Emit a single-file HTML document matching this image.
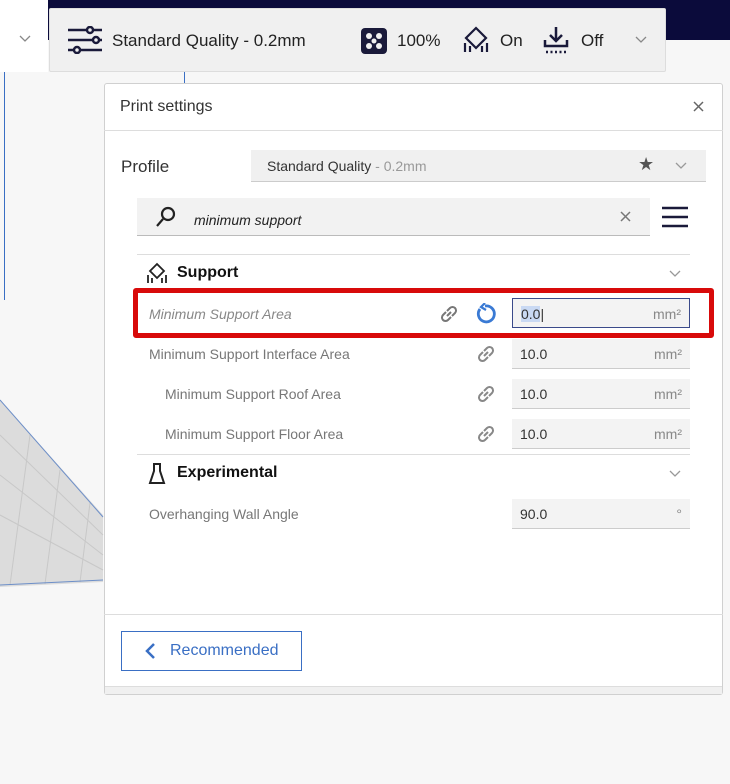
<!DOCTYPE html>
<html><head><meta charset="utf-8"><style>
*{box-sizing:border-box;margin:0;padding:0}
body{width:730px;height:784px;background:#f7f7f7;font-family:"Liberation Sans","DejaVu Sans",sans-serif;position:relative;overflow:hidden;color:#333}
.a{position:absolute}
.t{font-size:14px;color:#777;white-space:nowrap}
.inp{position:absolute;left:512px;width:178px;height:30px;background:#f3f3f3;border-bottom:1px solid #ccc;font-size:14px;color:#333;padding:7px 8px}
.inp .u{position:absolute;right:8px;top:7px;color:#888}
</style></head><body>
<div class="a" style="left:0;top:0;width:730px;height:40px;background:#0b0b3b"></div>
<div class="a" style="left:0;top:40px;width:730px;height:744px;background:#f7f7f7"></div>
<div class="a" style="left:0;top:0;width:48px;height:72px;background:#fff"></div>
<svg class="a" style="left:19px;top:35px" width="12" height="8" stroke="#888" stroke-width="1.3" fill="none"><path d="M1 1 L6 6 L11 1"/></svg>
<div class="a" style="left:4px;top:72px;width:1px;height:228px;background:#3a6fc4"></div>
<div class="a" style="left:184px;top:72px;width:1px;height:12px;background:#3a6fc4"></div>
<svg class="a" style="left:0;top:395px" width="104" height="200"><polygon points="0,5 103,120 103,187 0,192" fill="#dcdcdc"/><g stroke="#c8c8c8" stroke-width="1"><line x1="0" y1="40" x2="103" y2="140"/><line x1="0" y1="80" x2="103" y2="160"/><line x1="0" y1="120" x2="103" y2="175"/><line x1="30" y1="40" x2="10" y2="190"/><line x1="60" y1="75" x2="45" y2="189"/><line x1="90" y1="108" x2="80" y2="187"/></g><polyline points="0,5 103,122" stroke="#6d8fc8" fill="none"/><polyline points="0,190 103,185" stroke="#6d8fc8" fill="none"/></svg>
<div class="a" style="left:49px;top:8px;width:617px;height:64px;background:#f0f0f0;border:1px solid #ddd;border-radius:2px"></div>
<svg class="a" style="left:68px;top:26px" width="34" height="28" stroke="#1a1a3a" stroke-width="2.5" fill="none"><line x1="0" y1="4" x2="34" y2="4"/><line x1="0" y1="14" x2="34" y2="14"/><line x1="0" y1="24" x2="34" y2="24"/><circle cx="22" cy="4" r="3" fill="#f0f0f0"/><circle cx="28" cy="14" r="3" fill="#f0f0f0"/><circle cx="9" cy="24" r="3" fill="#f0f0f0"/></svg>
<div class="a" style="left:112px;top:31px;font-size:17px;color:#222">Standard Quality - 0.2mm</div>
<svg class="a" style="left:361px;top:28px" width="26" height="26"><rect x="0" y="0" width="26" height="26" rx="4" fill="#1a1a3a"/><g fill="#f0f0f0"><circle cx="8" cy="8" r="3"/><circle cx="18" cy="8" r="3"/><circle cx="8" cy="18" r="3"/><circle cx="18" cy="18" r="3"/><circle cx="13" cy="13" r="2.5"/></g></svg>
<div class="a" style="left:397px;top:31px;font-size:17px;color:#222">100%</div>
<svg class="a" style="left:462px;top:26px" width="28" height="28" stroke="#1a1a3a" stroke-width="2.2" fill="none"><path d="M14 2 L24 12 L14 22 L4 12 Z"/><path d="M3 26 V17 M8 26 V20 M20 26 V20 M25 26 V17"/></svg>
<div class="a" style="left:500px;top:31px;font-size:17px;color:#222">On</div>
<svg class="a" style="left:543px;top:26px" width="26" height="28" stroke="#1a1a3a" stroke-width="2.5" fill="none"><path d="M13 1 V14 M7 9 L13 15 L19 9 M2 14 V20 H24 V14"/><path d="M3 26 H23" stroke-dasharray="2 2.5"/></svg>
<div class="a" style="left:581px;top:31px;font-size:17px;color:#222">Off</div>
<svg class="a" style="left:635px;top:36px" width="12" height="8" stroke="#888" stroke-width="1.3" fill="none"><path d="M1 1 L6 6 L11 1"/></svg>

<div class="a" style="left:104px;top:83px;width:619px;height:612px;background:#fff;border:1px solid #d0d0d0;border-radius:3px"></div>
<div class="a" style="left:104px;top:130px;width:619px;height:1px;background:#ddd"></div>
<div class="a" style="left:120px;top:98px;font-size:16px;color:#333">Print settings</div>
<svg class="a" style="left:693px;top:101px" width="11" height="11" stroke="#666" stroke-width="1.5"><path d="M1 1 L10 10 M10 1 L1 10"/></svg>
<div class="a" style="left:121px;top:157px;font-size:17px;color:#333">Profile</div>
<div class="a" style="left:251px;top:150px;width:455px;height:32px;background:#f0f0f0;border-bottom:1px solid #ccc"></div>
<div class="a" style="left:267px;top:158px;font-size:14px;color:#333">Standard Quality <span style="color:#999">- 0.2mm</span></div>
<div class="a" style="left:638px;top:154px;font-size:18px;color:#555">★</div>
<svg class="a" style="left:675px;top:162px" width="12" height="8" stroke="#999" stroke-width="1.3" fill="none"><path d="M1 1 L6 6 L11 1"/></svg>
<div class="a" style="left:137px;top:198px;width:513px;height:38px;background:#f2f2f2;border-bottom:1px solid #bbb"></div>
<svg class="a" style="left:155px;top:206px" width="22" height="22" stroke="#222" stroke-width="2.2" fill="none"><circle cx="13" cy="8" r="6"/><line x1="8" y1="13" x2="2" y2="20"/></svg>
<div class="a" style="left:194px;top:212px;font-size:14px;font-style:italic;color:#222">minimum support</div>
<svg class="a" style="left:620px;top:211px" width="11" height="11" stroke="#777" stroke-width="1.5"><path d="M1 1 L10 10 M10 1 L1 10"/></svg>
<svg class="a" style="left:662px;top:205px" width="26" height="24" stroke="#1a1a3a" stroke-width="2.5"><line x1="0" y1="3" x2="26" y2="3"/><line x1="0" y1="12" x2="26" y2="12"/><line x1="0" y1="21" x2="26" y2="21"/></svg>
<div class="a" style="left:137px;top:254px;width:553px;height:1px;background:#ddd"></div>
<svg class="a" style="left:146px;top:262px" width="22" height="22" stroke="#222" stroke-width="1.8" fill="none"><path d="M11 2 L18 9 L11 16 L4 9 Z"/><path d="M2 21 V13 M6 21 V16 M16 21 V16 M20 21 V13"/></svg>
<div class="a" style="left:177px;top:264px;font-size:16px;font-weight:bold;color:#111">Support</div>
<svg class="a" style="left:669px;top:270px" width="12" height="8" stroke="#999" stroke-width="1.3" fill="none"><path d="M1 1 L6 6 L11 1"/></svg>
<div class="a" style="left:133px;top:288px;width:581px;height:50px;border:5px solid #d80a0a;border-radius:3px;background:#fff"></div>
<div class="a t" style="left:149px;top:306px;font-style:italic;color:#888">Minimum Support Area</div>
<svg class="a" style="left:438px;top:303px" width="22" height="22" stroke="#777" stroke-width="2" fill="none"><path d="M9 13 L13 9"/><path d="M8 9 L5 12 A3.5 3.5 0 0 0 10 17 L13 14"/><path d="M14 13 L17 10 A3.5 3.5 0 0 0 12 5 L9 8"/></svg>
<svg class="a" style="left:474px;top:303px" width="22" height="22" stroke="#3a7ad4" stroke-width="2.8" fill="none"><path d="M6 6 A8 8 0 1 0 11 3"/><path d="M11 0 L7 4 L12 7" stroke-width="2.2"/></svg>
<div class="inp" style="top:298px;border:1px solid #3a4a8a;background:#f3f3f3"><span style="background:#c9d9f3">0.0</span>|<span class="u">mm²</span></div>
<div class="a t" style="left:149px;top:346px">Minimum Support Interface Area</div>
<div class="a t" style="left:165px;top:386px">Minimum Support Roof Area</div>
<div class="a t" style="left:165px;top:426px">Minimum Support Floor Area</div>
<svg class="a" style="left:475px;top:343px" width="22" height="22" stroke="#888" stroke-width="2" fill="none"><path d="M9 13 L13 9"/><path d="M8 9 L5 12 A3.5 3.5 0 0 0 10 17 L13 14"/><path d="M14 13 L17 10 A3.5 3.5 0 0 0 12 5 L9 8"/></svg>
<svg class="a" style="left:475px;top:383px" width="22" height="22" stroke="#888" stroke-width="2" fill="none"><path d="M9 13 L13 9"/><path d="M8 9 L5 12 A3.5 3.5 0 0 0 10 17 L13 14"/><path d="M14 13 L17 10 A3.5 3.5 0 0 0 12 5 L9 8"/></svg>
<svg class="a" style="left:475px;top:423px" width="22" height="22" stroke="#888" stroke-width="2" fill="none"><path d="M9 13 L13 9"/><path d="M8 9 L5 12 A3.5 3.5 0 0 0 10 17 L13 14"/><path d="M14 13 L17 10 A3.5 3.5 0 0 0 12 5 L9 8"/></svg>
<div class="inp" style="top:339px">10.0<span class="u">mm²</span></div>
<div class="inp" style="top:379px">10.0<span class="u">mm²</span></div>
<div class="inp" style="top:419px">10.0<span class="u">mm²</span></div>
<div class="a" style="left:137px;top:454px;width:553px;height:1px;background:#ddd"></div>
<svg class="a" style="left:148px;top:463px" width="18" height="22" stroke="#222" stroke-width="2" fill="none"><path d="M5 1 H13 M6 1 V8 L2 20 H16 L12 8 V1"/></svg>
<div class="a" style="left:177px;top:464px;font-size:16px;font-weight:bold;color:#111">Experimental</div>
<svg class="a" style="left:669px;top:470px" width="12" height="8" stroke="#999" stroke-width="1.3" fill="none"><path d="M1 1 L6 6 L11 1"/></svg>
<div class="a t" style="left:149px;top:506px">Overhanging Wall Angle</div>
<div class="inp" style="top:499px">90.0<span class="u">°</span></div>
<div class="a" style="left:104px;top:614px;width:619px;height:1px;background:#ddd"></div>
<div class="a" style="left:121px;top:631px;width:181px;height:40px;border:1px solid #3a6fc4;background:#fff"></div>
<svg class="a" style="left:143px;top:642px" width="14" height="18" stroke="#3a6fc4" stroke-width="2.5" fill="none"><path d="M11 2 L4 9 L11 16"/></svg>
<div class="a" style="left:170px;top:642px;font-size:16px;color:#3a6fc4">Recommended</div>
<div class="a" style="left:105px;top:686px;width:617px;height:8px;background:#f0f0f0;border-top:1px solid #ddd"></div>
</body></html>
